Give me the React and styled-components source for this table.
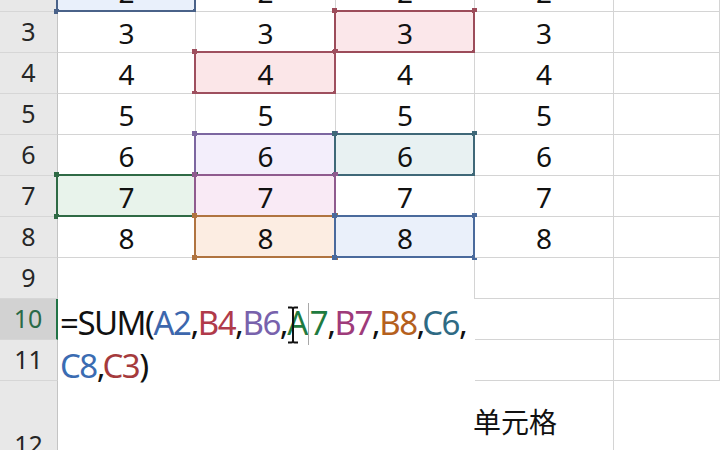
import React from 'react';
import styled, { createGlobalStyle } from 'styled-components';

const GlobalStyle = createGlobalStyle`
  html, body {
    margin: 0;
    padding: 0;
    background: #ffffff;
  }
  body {
    font-family: "Noto Sans", "Open Sans", "Noto Sans CJK SC", sans-serif;
  }
`;

const Viewport = styled.div`
  width: 720px;
  height: 450px;
  overflow: hidden;
  background: #fff;
`;

// sheet is scrolled so row 2 is mostly hidden above the top edge
const Sheet = styled.div`
  display: grid;
  grid-template-columns: 58px 138px 140px 139px 139px 1fr;
  grid-template-rows: repeat(10, 41px) 76px;
  margin-top: -29px;
  width: 720px;
`;

const RowHead = styled.div`
  box-sizing: border-box;
  display: flex;
  justify-content: center;
  align-items: ${p => (p.$bottom ? 'flex-end' : 'center')};
  padding-bottom: ${p => (p.$bottom ? '0px' : '2px')};
  font-size: 25px;
  line-height: 1;
  color: ${p => (p.$active ? '#2a6a47' : '#262626')};
  background: ${p => (p.$active ? '#d2d2d2' : '#e8e8e8')};
  border-bottom: ${p => (p.$bottom ? 'none' : '1px solid #d6d6d6')};
  border-right: ${p => (p.$active ? '2px solid #217346' : '1px solid #c4c4c4')};
`;

const Cell = styled.div`
  position: relative;
  box-sizing: border-box;
  display: flex;
  justify-content: center;
  align-items: center;
  padding-top: 1px;
  font-size: 28px;
  line-height: 1;
  color: #111;
  background: ${p => p.$fill || '#fff'};
  border-right: 1px solid #d4d4d4;
  border-bottom: 1px solid #d4d4d4;
`;

const RefBox = styled.div`
  position: absolute;
  top: -2px;
  left: -2px;
  right: -1px;
  bottom: -1px;
  border: 2px solid ${p => p.$color};
  pointer-events: none;
`;

const Handle = styled.span`
  position: absolute;
  width: 5px;
  height: 5px;
  background: ${p => p.$color};
  top: ${p => (p.$y === 't' ? '-4px' : 'auto')};
  bottom: ${p => (p.$y === 'b' ? '-4px' : 'auto')};
  left: ${p => (p.$x === 'l' ? '-4px' : 'auto')};
  right: ${p => (p.$x === 'r' ? '-4px' : 'auto')};
`;

const Editor = styled.div`
  position: relative;
  grid-column: 2 / 5;
  grid-row: 9 / 11;
  box-sizing: border-box;
  padding: 3px 0 0 2px;
  font-size: 33px;
  line-height: 41px;
  letter-spacing: -1.5px;
  color: #111;
  background: #fff;
  white-space: pre-wrap;
  word-break: break-all;
`;

const Ref = styled.span`
  color: ${p => p.$color};
`;

const Caret = styled.span`
  display: inline-block;
  width: 1px;
  height: 42px;
  margin: 0 1px 0 1px;
  vertical-align: -10px;
  background: #a8a8a8;
`;

const IBeam = styled.svg`
  position: absolute;
  left: 229px;
  top: 7px;
`;

const BlankCell = styled.div`
  box-sizing: border-box;
  background: #fff;
  border-right: ${p => (p.$right ? '1px solid #d4d4d4' : 'none')};
  border-bottom: ${p => (p.$bottom ? '1px solid #d4d4d4' : 'none')};
`;

const NoteCell = styled.div`
  box-sizing: border-box;
  padding: 26px 0 0 0;
  margin-left: -2px;
  font-family: "Noto Sans CJK SC", "Noto Sans", sans-serif;
  font-size: 28px;
  line-height: 1;
  color: #111;
  border-right: 1px solid #d4d4d4;
`;

const refs = {
  A2: { border: '#4a6289', fill: '#e9f0fb' },
  C3: { border: '#9c4c5a', fill: '#fbe7ea' },
  B4: { border: '#9e4f5e', fill: '#fbe6e8' },
  B6: { border: '#7c66a0', fill: '#f3eefb' },
  C6: { border: '#3f6878', fill: '#e8f1f2' },
  A7: { border: '#2f6a45', fill: '#e8f3eb' },
  B7: { border: '#8f5b8e', fill: '#f9eaf5' },
  B8: { border: '#b07440', fill: '#fcede2' },
  C8: { border: '#4a6a9c', fill: '#eaf0fa' },
};

const formulaColors = {
  A2: '#3d67ad',
  B4: '#b03a4a',
  B6: '#7862ac',
  A7: '#1f7b40',
  B7: '#9e3b7a',
  B8: '#b5601d',
  C6: '#2e6a84',
  C8: '#3b6cb2',
  C3: '#a53a3c',
};

const cols = ['A', 'B', 'C', 'D'];
const dataRows = [2, 3, 4, 5, 6, 7, 8];

const RefCell = ({ id, value }) => {
  const ref = refs[id];
  if (!ref) return <Cell>{value}</Cell>;
  return (
    <Cell $fill={ref.fill}>
      {value}
      <RefBox $color={ref.border}>
        <Handle $color={ref.border} $x="l" $y="t" />
        <Handle $color={ref.border} $x="r" $y="t" />
        <Handle $color={ref.border} $x="l" $y="b" />
        <Handle $color={ref.border} $x="r" $y="b" />
      </RefBox>
    </Cell>
  );
};

const App = () => {
  return (
    <Viewport>
      <GlobalStyle />
      <Sheet>
        {dataRows.map(r => (
          <React.Fragment key={r}>
            <RowHead>{r}</RowHead>
            {cols.map(c => (
              <RefCell key={c} id={`${c}${r}`} value={r} />
            ))}
            <Cell />
          </React.Fragment>
        ))}

        {/* row 9 */}
        <RowHead>9</RowHead>
        <BlankCell />
        <BlankCell />
        <BlankCell $right />
        <BlankCell $right $bottom />
        <BlankCell $right $bottom />

        {/* row 10: cell editor spills over B and C, wraps into row 11 */}
        <RowHead $active>10</RowHead>
        <Editor>
          =SUM(
          <Ref $color={formulaColors.A2}>A2</Ref>,
          <Ref $color={formulaColors.B4}>B4</Ref>,
          <Ref $color={formulaColors.B6}>B6</Ref>,
          <Ref $color={formulaColors.A7}>A<Caret />7</Ref>,
          <Ref $color={formulaColors.B7}>B7</Ref>,
          <Ref $color={formulaColors.B8}>B8</Ref>,
          <Ref $color={formulaColors.C6}>C6</Ref>,
          <Ref $color={formulaColors.C8}>C8</Ref>,
          <Ref $color={formulaColors.C3}>C3</Ref>)
          <IBeam width="12" height="38" viewBox="0 0 12 38">
            <path d="M1 1.5h3.5q1.5 0 1.5 2v31q0 2-1.5 2H1M11 1.5H7.5q-1.5 0-1.5 2v31q0 2 1.5 2H11" fill="none" stroke="#111" strokeWidth="2" />
          </IBeam>
        </Editor>
        <BlankCell $right $bottom />
        <BlankCell $right $bottom />

        {/* row 11 */}
        <RowHead>11</RowHead>
        <BlankCell $right $bottom />
        <BlankCell $right $bottom />

        {/* row 12 */}
        <RowHead $bottom>12</RowHead>
        <BlankCell />
        <BlankCell />
        <BlankCell />
        <NoteCell>单元格</NoteCell>
        <BlankCell />
      </Sheet>
    </Viewport>
  );
};

export default App;
